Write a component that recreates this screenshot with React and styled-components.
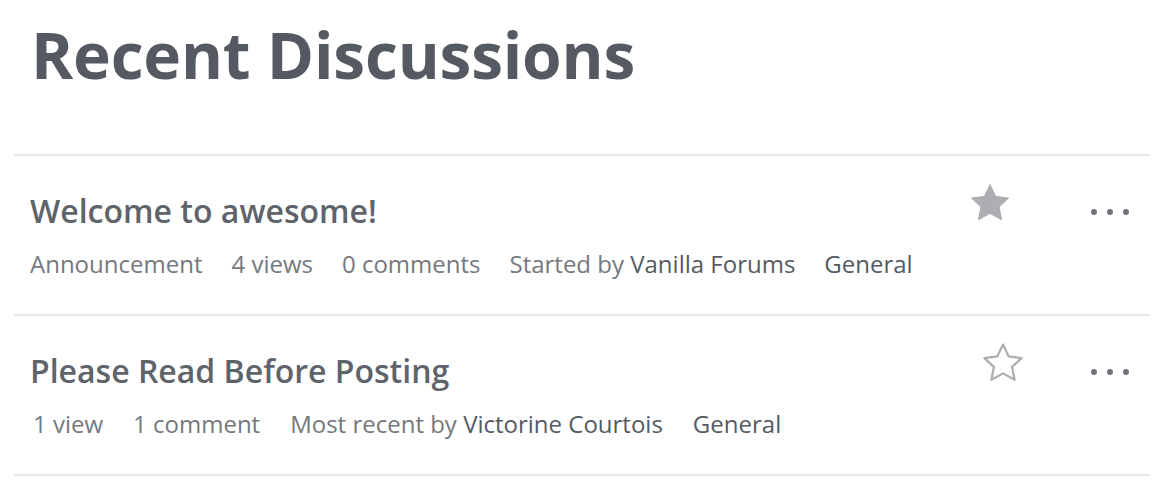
import React from 'react';
import styled, { createGlobalStyle } from 'styled-components';

const COLORS = {
  heading: '#555a62',
  title: '#5f646b',
  meta: '#75787d',
  metaStrong: '#555a62',
  rule: '#e5e6e7',
  star: '#adaeb1',
  dots: '#6f737a',
};

const GlobalStyle = createGlobalStyle`
  body {
    margin: 0;
    background: #ffffff;
    font-family: "Open Sans", "Liberation Sans", sans-serif;
  }
`;

const Page = styled.main`
  padding: 0 14px;
  width: 1164px;
  box-sizing: border-box;
`;

const Heading = styled.h1`
  margin: 0;
  padding: 10px 0 0 17px;
  height: 154px;
  box-sizing: border-box;
  font-size: 64px;
  font-weight: 700;
  line-height: 90px;
  color: ${COLORS.heading};
  letter-spacing: -0.2px;
`;

const List = styled.ul`
  list-style: none;
  margin: 0;
  padding: 0;
  border-top: 2px solid ${COLORS.rule};
`;

const Item = styled.li`
  display: flex;
  align-items: flex-start;
  height: 158px;
  padding: 0 16px;
  border-bottom: 2px solid ${COLORS.rule};
`;

const Main = styled.div`
  flex: 1;
  display: flex;
  flex-direction: column;
  padding-top: 33px;
`;

const Title = styled.a`
  font-size: 32px;
  font-weight: 600;
  line-height: 44px;
  color: ${COLORS.title};
  text-decoration: none;
`;

const Meta = styled.div`
  display: flex;
  gap: ${(p) => p.$gap}px;
  margin-top: 14px;
  font-size: 24px;
  line-height: 34px;
  color: ${COLORS.meta};
  padding-left: ${(p) => p.$indent || 0}px;
`;

const Strong = styled.span`
  color: ${COLORS.metaStrong};
`;

const Actions = styled.div`
  display: flex;
  align-items: flex-start;
  padding-top: 23px;
`;

const StarButton = styled.button`
  border: 0;
  background: none;
  padding: 0;
  width: 48px;
  height: 48px;
  display: flex;
  align-items: center;
  justify-content: center;
  margin-right: ${(p) => p.$gap}px;
  cursor: pointer;
`;

const DotsButton = styled.button`
  border: 0;
  background: none;
  padding: 0;
  width: 44px;
  height: 44px;
  margin-top: 11px;
  display: flex;
  align-items: center;
  justify-content: space-between;
  cursor: pointer;
  margin-right: 2px;

  span {
    width: 6px;
    height: 6px;
    border-radius: 50%;
    background: ${COLORS.dots};
    margin: 0 3px;
  }
`;

function Star({ filled }) {
  return (
    <svg width="48" height="48" viewBox="0 0 24 24">
      <path
        d="M12 2.8l2.85 5.9 6.45.85-4.75 4.4 1.25 6.45L12 17.2l-5.8 3.2 1.25-6.45-4.75-4.4 6.45-.85z"
        fill={filled ? COLORS.star : 'none'}
        stroke={COLORS.star}
        strokeWidth={filled ? 0.5 : 1.1}
        strokeLinejoin="round"
      />
    </svg>
  );
}

const discussions = [
  {
    id: 1,
    title: 'Welcome to awesome!',
    starred: true,
    starGap: 74,
    metaGap: 29,
    indent: 0,
    meta: [
      'Announcement',
      '4 views',
      '0 comments',
      <>Started by <Strong>Vanilla Forums</Strong></>,
      <Strong>General</Strong>,
    ],
  },
  {
    id: 2,
    title: 'Please Read Before Posting',
    starred: false,
    starGap: 61,
    metaGap: 30,
    indent: 3,
    meta: [
      '1 view',
      '1 comment',
      <>Most recent by <Strong>Victorine Courtois</Strong></>,
      <Strong>General</Strong>,
    ],
  },
];

export default function App() {
  return (
    <>
      <GlobalStyle />
      <Page>
        <Heading>Recent Discussions</Heading>
        <List>
          {discussions.map((d) => (
            <Item key={d.id}>
              <Main>
                <Title href="#">{d.title}</Title>
                <Meta $indent={d.indent} $gap={d.metaGap}>
                  {d.meta.map((m, i) => (
                    <span key={i}>{m}</span>
                  ))}
                </Meta>
              </Main>
              <Actions>
                <StarButton $gap={d.starGap} aria-label="Bookmark">
                  <Star filled={d.starred} />
                </StarButton>
                <DotsButton aria-label="Options">
                  <span />
                  <span />
                  <span />
                </DotsButton>
              </Actions>
            </Item>
          ))}
        </List>
      </Page>
    </>
  );
}
